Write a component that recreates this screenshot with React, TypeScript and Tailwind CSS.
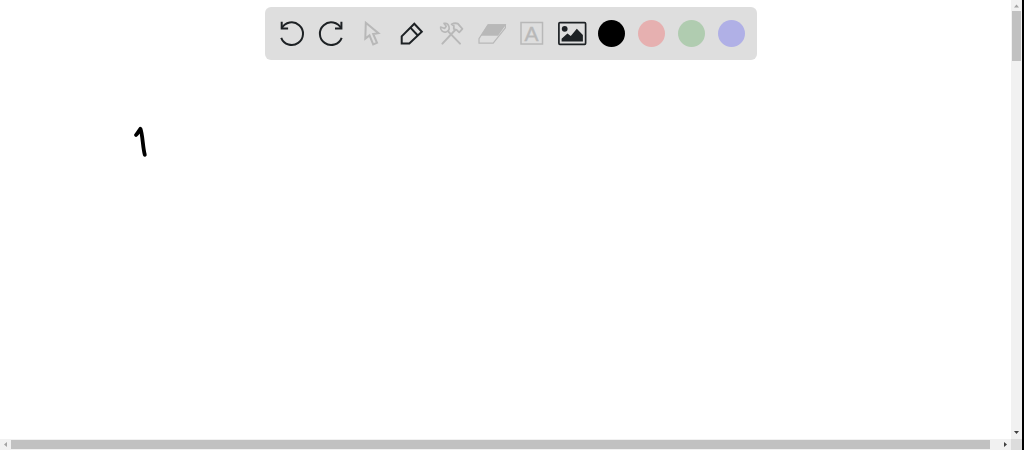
import { useState } from "react";
import type { ReactNode } from "react";

type Tool = {
  name: string;
  active: boolean;
  icon: ReactNode;
};

const tools: Tool[] = [
  {
    name: "Undo",
    active: true,
    icon: (
      <>
        <path d="M10.7 15.4a11.3 11.3 0 1 1-.5 9.4" />
        <path d="M10.7 8.7v6.8h6.4" />
      </>
    ),
  },
  {
    name: "Redo",
    active: true,
    icon: (
      <>
        <path d="M30.2 15.4a11.3 11.3 0 1 0 .5 9.4" />
        <path d="M30.4 8.7v6.8h-6.4" />
      </>
    ),
  },
  {
    name: "Select",
    active: false,
    icon: <path d="M14.8 9.8l12.6 10.4-5.2.8 3.8 8.8-3.8 1.6-3.7-9-4.2 3.2z" />,
  },
  {
    name: "Pen",
    active: true,
    icon: (
      <>
        <path d="M10.7 30.5v-7.2L23.3 10.7l7.5 8-12.5 11.8z" />
        <path d="M19.4 14.6l7.4 7.9" />
      </>
    ),
  },
  {
    name: "Tools",
    active: false,
    icon: (
      <g strokeLinejoin="round" strokeLinecap="round">
        <path d="M9.6 14a4.4 4.4 0 0 0 5.400 5 4.600 4.600 0 0 0 3-5.400 4.400 4.400 0 0 0-5-3.200l2.200 2.800-1.400 2.200z" strokeWidth="1.6" />
        <path d="M17.400 18.600l11.600 12" />
        <path d="M20.600 11.200c2-1 4-1.200 6.200-.6l4.600 5.200-3.200 3.600-2.600-2.600-2.800-.8v-3.200z" strokeWidth="1.8" />
        <path d="M24.200 17L11.400 30.600" />
      </g>
    ),
  },
  {
    name: "Eraser",
    active: false,
    icon: (
      <>
        <path d="M17 11.3h18.3l-8.3 11.4H9.8z" fill="currentColor" stroke="none" />
        <path d="M17 11.8h17.4v3L22.2 30.2H8v-4.4z" strokeWidth="1.2" />
      </>
    ),
  },
  {
    name: "Text",
    active: false,
    icon: (
      <>
        <rect x="10" y="9.5" width="21.5" height="21.5" strokeWidth="1.5" />
        <text
          x="20.5"
          y="28"
          textAnchor="middle"
          fontSize="21"
          fill="currentColor"
          strokeWidth="0.4"
          className="font-['Liberation_Sans',sans-serif]"
        >
          A
        </text>
      </>
    ),
  },
  {
    name: "Image",
    active: true,
    icon: (
      <>
        <rect x="7.9" y="9.7" width="26.7" height="21.6" rx="1" strokeWidth="1.7" />
        <circle cx="13.7" cy="15.8" r="2.9" fill="currentColor" stroke="none" />
        <path
          d="M10.6 28.5v-2.8l5.8-5.2 3.4 2.6 6-7.3 6.1 6.1v6.6z"
          fill="currentColor"
          stroke="none"
        />
      </>
    ),
  },
];

const colors = [
  { name: "Black", className: "bg-black" },
  { name: "Red", className: "bg-[#e6b0b0]" },
  { name: "Green", className: "bg-[#b0ccb0]" },
  { name: "Blue", className: "bg-[#b0b0e6]" },
];

function Toolbar() {
  const [color, setColor] = useState("Black");

  return (
    <div
      role="toolbar"
      aria-label="Drawing tools"
      className="flex items-center rounded-md bg-[#dedede] px-1.5 pt-1.5 pb-[7px]"
    >
      {tools.map((tool) => (
        <button
          key={tool.name}
          type="button"
          aria-label={tool.name}
          className={tool.active ? "text-[#1d2124]" : "text-[#b8b8b8]"}
        >
          <svg
            className="size-10"
            viewBox="0 0 40 40"
            fill="none"
            stroke="currentColor"
            strokeWidth="2"
          >
            {tool.icon}
          </svg>
        </button>
      ))}
      {colors.map((c) => (
        <label key={c.name} className="flex size-10 items-center justify-center">
          <input
            type="radio"
            name="color"
            aria-label={c.name}
            checked={color === c.name}
            onChange={() => setColor(c.name)}
            className={`size-[27px] appearance-none rounded-full ${c.className}`}
          />
        </label>
      ))}
    </div>
  );
}

function Arrow({ d }: { d: string }) {
  return (
    <svg className="size-[11px]" viewBox="0 0 11 11" fill="currentColor">
      <path d={d} />
    </svg>
  );
}

export default function App() {
  return (
    <div className="relative grid h-screen grid-cols-[1fr_11px] grid-rows-[1fr_11px] border-r-2 border-black bg-white">
      <main className="min-h-0 min-w-0">
        <svg className="h-full w-full" role="img" aria-label="Whiteboard">
          <path
            d="M136 135c1.600-1.600 2.800-3.800 4.400-6.200 2.400 6.200 2.200 18.200 4.400 26"
            fill="none"
            stroke="black"
            strokeWidth="3.8"
            strokeLinecap="round"
            strokeLinejoin="round"
          />
        </svg>
      </main>

      {/* Vertical scrollbar */}
      <div className="flex flex-col bg-[#f1f1f1]">
        <button type="button" aria-label="Scroll up" className="text-[#a3a3a3]">
          <Arrow d="M3 7.500L5.500 4.500L8 7.500z" />
        </button>
        <div className="flex-1">
          <div className="mx-px h-[12%] bg-[#c1c1c1]" />
        </div>
        <button type="button" aria-label="Scroll down" className="text-[#404040]">
          <Arrow d="M3 3L5.500 6L8 3z" />
        </button>
      </div>

      {/* Horizontal scrollbar */}
      <div className="flex bg-[#f1f1f1]">
        <button type="button" aria-label="Scroll left" className="text-[#a3a3a3]">
          <Arrow d="M7 3L4 5.500L7 8z" />
        </button>
        <div className="flex-1 py-px">
          <div className="h-full w-[99%] bg-[#c1c1c1]" />
        </div>
        <button type="button" aria-label="Scroll right" className="text-[#404040]">
          <Arrow d="M4 3L7 5.500L4 8z" />
        </button>
      </div>
      <div className="bg-[#dcdcdc]" />

      <div className="absolute inset-x-0 top-[7px] flex justify-center">
        <Toolbar />
      </div>
    </div>
  );
}
